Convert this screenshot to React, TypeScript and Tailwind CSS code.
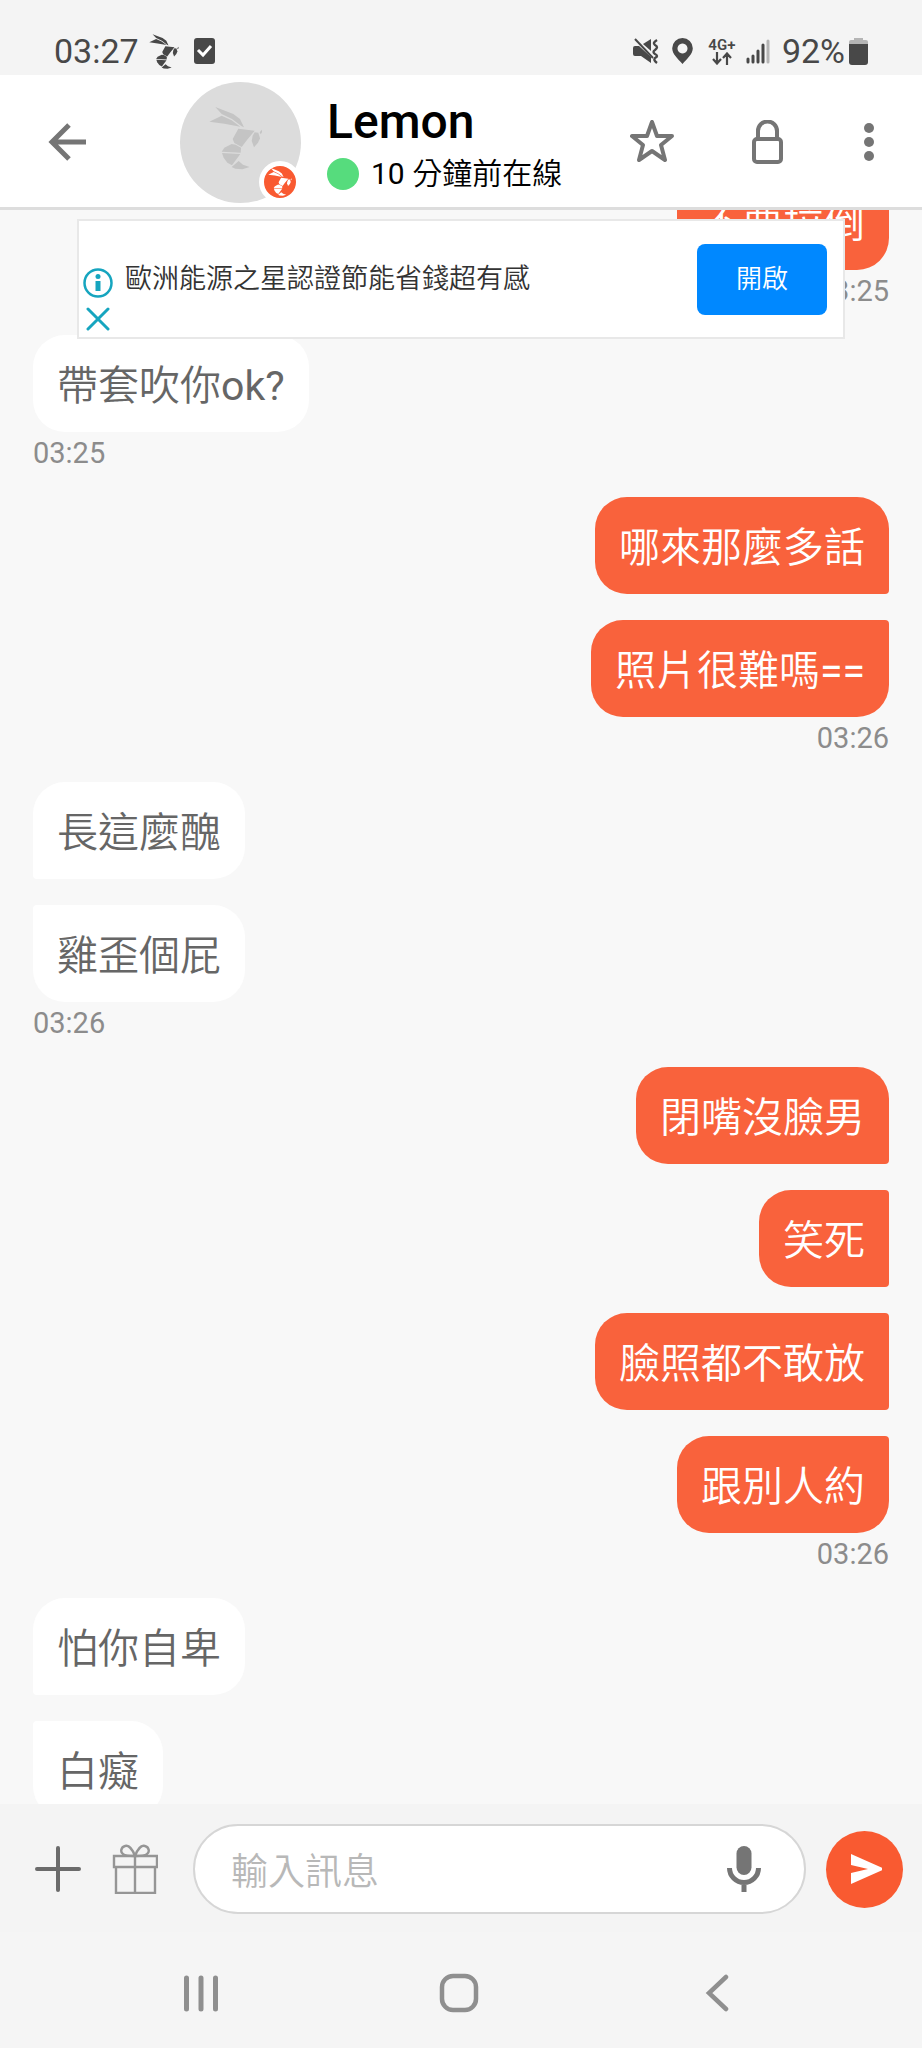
import React, { useState } from "react";

type Bubble = {
  text: string;
  shape: string;
};

type Group = {
  mine: boolean;
  time?: string;
  bubbles: Bubble[];
};

const groups: Group[] = [
  {
    mine: true,
    time: "03:25",
    bubbles: [{ text: "不要拉倒", shape: "rounded-[32px] rounded-tr-[4px]" }],
  },
  {
    mine: false,
    time: "03:25",
    bubbles: [{ text: "帶套吹你ok?", shape: "rounded-[32px]" }],
  },
  {
    mine: true,
    time: "03:26",
    bubbles: [
      { text: "哪來那麼多話", shape: "rounded-[32px] rounded-br-[4px]" },
      { text: "照片很難嗎==", shape: "rounded-[32px] rounded-tr-[4px]" },
    ],
  },
  {
    mine: false,
    time: "03:26",
    bubbles: [
      { text: "長這麼醜", shape: "rounded-[32px] rounded-bl-[4px]" },
      { text: "雞歪個屁", shape: "rounded-[32px] rounded-tl-[4px]" },
    ],
  },
  {
    mine: true,
    time: "03:26",
    bubbles: [
      { text: "閉嘴沒臉男", shape: "rounded-[32px] rounded-br-[4px]" },
      { text: "笑死", shape: "rounded-[32px] rounded-r-[4px]" },
      { text: "臉照都不敢放", shape: "rounded-[32px] rounded-r-[4px]" },
      { text: "跟別人約", shape: "rounded-[32px] rounded-tr-[4px]" },
    ],
  },
  {
    mine: false,
    bubbles: [
      { text: "怕你自卑", shape: "rounded-[32px] rounded-bl-[4px]" },
      { text: "白癡", shape: "rounded-[32px] rounded-tl-[4px]" },
    ],
  },
];

function Hornet({ className, viewBox = "115 110 159 189" }: { className: string; viewBox?: string }) {
  return (
    <svg className={className} viewBox={viewBox} fill="currentColor" aria-hidden="true">
      <path d="M133 111 L154 119 L187 132 L207 147 L219 172 L211 168 L183 147 L152 132 Z" />
      <path d="M115 155 L152 137 L182 151 L208 170 L160 161 Z" />
      <path d="M202 176 L251 182 L228 210 L212 231 L190 219 L185 207 Z" />
      <path d="M251 187 L262 188 L267 205 L261 218 L249 232 L242 213 L245 197 Z" />
      <path d="M266 187 L273 179 L273 187 L269 193 Z" />
      <path d="M182 222 L194 224 L210 233 L209 248 L152 245 L160 233 Z" />
      <path d="M153 249 L208 252 L183 286 L169 278 L158 263 Z" />
      <path d="M203 273 L216 284 L236 291 L214 298 L193 296 L182 291 Z" />
    </svg>
  );
}

function StatusBar() {
  return (
    <div className="flex h-[75px] shrink-0 items-center bg-[#f4f4f4] pt-[27px] pr-[54px] pl-[54px] text-[#484848]">
      <span className="text-[34px] leading-[40px]">03:27</span>
      <Hornet className="ml-[10px] h-[35px] w-[30px]" />
      <svg className="ml-[15px] h-[26px] w-[21px]" viewBox="0 0 21 26" aria-hidden="true">
        <rect width="21" height="26" rx="3" fill="currentColor" />
        <path d="M4 12 L9 17 L17 8" fill="none" stroke="white" strokeWidth="3" />
      </svg>

      <div className="ml-auto flex items-center">
        <svg className="h-[26px] w-[27px]" viewBox="0 0 27 26" fill="currentColor" aria-hidden="true">
          <path d="M0 10 Q0 8 2 8 H6 L18 19 V25 L8 18 H2 Q0 18 0 16 Z" />
          <path d="M10 6 L18 1 V13 Z" />
          <path d="M2 1 L20 20" stroke="currentColor" strokeWidth="2" />
          <path
            d="M24 2 Q19 5 22 7 Q26 9 22 12 Q19 14 22 16 Q26 18 22 20 Q20 22 24 25"
            fill="none"
            stroke="currentColor"
            strokeWidth="2.4"
          />
        </svg>
        <svg className="ml-3 h-[26px] w-[21px]" viewBox="0 0 21 26" fill="currentColor" aria-hidden="true">
          <path
            fillRule="evenodd"
            d="M10.500 0 A10.300 10.300 0 0 1 20.800 10.300 C20.800 16 15 21 10.500 26 C6 21 0.200 16 0.200 10.300 A10.300 10.300 0 0 1 10.500 0 Z M10.500 5.500 a5 5 0 1 0 0.010 0 Z"
          />
        </svg>
        <div className="ml-[14px] flex w-[30px] flex-col items-center">
          <span className="text-[15px] leading-[14px] font-semibold">4G+</span>
          <svg className="h-[13px] w-[20px]" viewBox="0 0 20 13" fill="none" stroke="currentColor" strokeWidth="2.2" aria-hidden="true">
            <path d="M5 0 V11 M1 7 L5 11.500 L9 7 M15 13 V2 M11 6 L15 1.500 L19 6" />
          </svg>
        </div>
        <svg className="ml-[9px] h-[26px] w-[24px]" viewBox="0 0 24 26" fill="none" stroke="currentColor" strokeWidth="3" strokeLinecap="round" aria-hidden="true">
          <path d="M2 21 V24 M7 18 V24 M12 13 V24 M17 7 V24" />
          <path d="M22 3 V24" stroke="#b5b5b5" />
        </svg>
        <span className="ml-3 text-[34px] leading-[40px]">92%</span>
        <svg className="ml-1 h-[28px] w-[19px]" viewBox="0 0 19 28" aria-hidden="true">
          <path d="M5 1 H14 V3 H17 Q19 3 19 5 V8 H0 V5 Q0 3 2 3 H5 Z" fill="#b5b5b5" />
          <path d="M0 7 H19 V25 Q19 28 16 28 H3 Q0 28 0 25 Z" fill="currentColor" />
        </svg>
      </div>
    </div>
  );
}

function Header() {
  return (
    <header className="flex h-[135px] shrink-0 items-center border-b-[3px] border-[#dddddd] bg-white px-12 pt-[2px] text-[#757575]">
      <button type="button" aria-label="返回">
        <svg className="h-[38px] w-[38px]" viewBox="0 0 38 38" fill="none" stroke="currentColor" strokeWidth="5">
          <path d="M38 19 H4 M21 2 L4 19 L21 36" />
        </svg>
      </button>

      <div className="relative ml-[94px] size-[121px] shrink-0 rounded-full bg-[#dcdcdc] text-[#c4c4c4]">
        <Hornet className="size-full" viewBox="27 36 363 363" />
        <span className="absolute right-0 bottom-0 flex size-[42px] items-center justify-center rounded-full border-[5px] border-white bg-[#f95a31] text-white">
          <Hornet className="h-[28px] w-[24px]" />
        </span>
      </div>

      <div className="ml-[26px] pt-[10px] text-black">
        <h1 className="text-[48px] leading-[54px] font-medium">Lemon</h1>
        <p className="flex items-center text-[30px] leading-[50px] font-[350]">
          <span className="mr-3 size-8 rounded-full bg-[#56dc7d]" />
          <span>
            <span className="font-normal">10 </span>分鐘前在線
          </span>
        </p>
      </div>

      <div className="ml-auto flex items-center gap-[78px]">
        <button type="button" aria-label="收藏">
          <svg className="h-[44px] w-[44px]" viewBox="0 0 44 44" fill="none" stroke="currentColor" strokeWidth="4" strokeLinejoin="round">
            <path d="M22 2 L27 16 L42 16 L31 25 L35 40 L22 31 L9 40 L13 25 L2 16 L17 16 Z" />
          </svg>
        </button>
        <button type="button" aria-label="鎖定">
          <svg className="h-[44px] w-[32px]" viewBox="0 0 32 44" fill="none" stroke="currentColor" strokeWidth="4">
            <rect x="2" y="19" width="27" height="23" rx="3" />
            <path d="M6 19 V11 A9.500 9.500 0 0 1 25 11 V19" />
          </svg>
        </button>
        <button type="button" aria-label="更多">
          <svg className="h-[40px] w-[12px]" viewBox="0 0 12 40" fill="currentColor">
            <circle cx="7" cy="6" r="5" />
            <circle cx="7" cy="20" r="5" />
            <circle cx="7" cy="34" r="5" />
          </svg>
        </button>
      </div>
    </header>
  );
}

function AdBanner() {
  return (
    <aside className="absolute inset-x-[77px] top-[9px] flex h-[120px] border-2 border-[#e8e8e8] bg-white">
      <div className="flex w-[37px] flex-col items-center justify-end gap-[9px] pb-[6px] text-[#16a5bf]">
        <svg className="h-[30px] w-[30px]" viewBox="0 0 30 30" fill="currentColor" aria-hidden="true">
          <circle cx="15" cy="15" r="13.500" fill="none" stroke="currentColor" strokeWidth="2.500" />
          <circle cx="15" cy="8.500" r="2.500" />
          <path d="M12.500 13 H17.500 V23 H12.500 Z" />
        </svg>
        <button type="button" aria-label="關閉廣告">
          <svg className="h-[24px] w-[24px]" viewBox="0 0 24 24" fill="none" stroke="currentColor" strokeWidth="3" strokeLinecap="round">
            <path d="M2 2 L22 22 M22 2 L2 22" />
          </svg>
        </button>
      </div>
      <p className="flex-1 self-center pl-[9px] text-[27px] leading-[40px] font-[350] text-[#333333]">
        歐洲能源之星認證節能省錢超有感
      </p>
      <button type="button" className="mr-4 h-[71px] w-[130px] self-center rounded-[8px] bg-[#0088ff] text-[26px] font-[350] text-white">
        開啟
      </button>
    </aside>
  );
}

// chinese runs are set a bit lighter than the latin ones
function MixedText({ text }: { text: string }) {
  return (
    <>
      {text.split(/([a-z?=]+)/).map((part, i) =>
        i % 2 ? (
          <span key={i} className="font-normal">
            {part}
          </span>
        ) : (
          part
        )
      )}
    </>
  );
}

function MessageGroup({ group }: { group: Group }) {
  return (
    <li className={group.mine ? "flex flex-col items-end" : "flex flex-col items-start"}>
      <div className={group.mine ? "flex flex-col items-end gap-[26px]" : "flex flex-col items-start gap-[26px]"}>
        {group.bubbles.map((b) => (
          <p
            key={b.text}
            className={
              (group.mine ? "bg-[#f9623c] text-white " : "bg-white text-[#666666] ") +
              "px-6 pt-[27px] pb-[21px] text-[41px] leading-[49px] font-[350] " +
              b.shape
            }
          >
            <MixedText text={b.text} />
          </p>
        ))}
      </div>
      {group.time && (
        <time className="pt-1 pb-[27px] text-[29px] leading-[34px] text-[#8c8c8c]">{group.time}</time>
      )}
    </li>
  );
}

function Composer() {
  const [message, setMessage] = useState("");

  return (
    <form
      onSubmit={(e) => e.preventDefault()}
      className="flex h-[128px] shrink-0 items-center bg-[#f4f4f4] pt-[2px] pr-[19px] pl-[34px]"
    >
      <button type="button" aria-label="新增" className="text-[#6b6b6b]">
        <svg className="h-[48px] w-[48px]" viewBox="0 0 48 48" fill="none" stroke="currentColor" strokeWidth="4" strokeLinecap="round">
          <path d="M24 3 V45 M3 24 H45" />
        </svg>
      </button>
      <button type="button" aria-label="禮物" className="ml-[30px] text-[#959595]">
        <svg className="h-[50px] w-[46px]" viewBox="0 0 46 50" fill="none" stroke="currentColor" strokeWidth="2.4">
          <path d="M2 12 H45 V23 H2 Z M4 23 H43 V49 H4 Z M23 12 V49" />
          <path d="M23 12 C20 4 16 1 13 2 C9 3 8 8 11 10 C13 12 18 12 23 12 C28 12 33 12 35 10 C38 8 37 3 33 2 C30 1 26 4 23 12 Z" />
        </svg>
      </button>

      <div className="ml-[35px] flex h-[90px] min-w-0 flex-1 items-center rounded-full border-2 border-[#d6d6d6] bg-white pr-[43px] pl-9">
        <input
          type="text"
          aria-label="輸入訊息"
          placeholder="輸入訊息"
          value={message}
          onChange={(e) => setMessage(e.target.value)}
          className="min-w-0 flex-1 pt-[7px] text-[37px] leading-[56px] font-[350] text-[#666666] outline-none placeholder:text-[#b8b8b8]"
        />
        <button type="button" aria-label="語音" className="text-[#757575]">
          <svg className="h-[46px] w-[34px]" viewBox="0 0 34 46" fill="currentColor">
            <rect x="9.500" y="0" width="15" height="29" rx="7.500" />
            <path d="M2.500 22 A14.500 14.500 0 0 0 31.500 22 M17 36 V46" fill="none" stroke="currentColor" strokeWidth="5" />
          </svg>
        </button>
      </div>

      <button
        type="submit"
        aria-label="傳送"
        className="ml-5 flex size-[77px] items-center justify-center rounded-full bg-[#f95a31] text-white"
      >
        <svg className="h-[30px] w-[34px]" viewBox="0 0 34 30" fill="currentColor">
          <path d="M3 0 L37 15 L3 30 V19 L20 15 L3 11 Z" />
        </svg>
      </button>
    </form>
  );
}

function NavBar() {
  return (
    <nav className="grid h-[116px] shrink-0 grid-cols-3 items-center justify-items-center bg-[#f5f5f5] pt-[5px] pr-[76px] pl-[72px] text-[#8f8f8f]">
      <button type="button" aria-label="最近使用">
        <svg className="h-[38px] w-[36px]" viewBox="0 0 36 38" fill="none" stroke="currentColor" strokeWidth="5" strokeLinecap="round">
          <path d="M3.500 4 V35 M18 4 V35 M32.500 4 V35" />
        </svg>
      </button>
      <button type="button" aria-label="首頁">
        <svg className="h-[40px] w-[40px]" viewBox="0 0 40 40" fill="none" stroke="currentColor" strokeWidth="4.500">
          <rect x="3" y="3" width="34" height="34" rx="11" />
        </svg>
      </button>
      <button type="button" aria-label="上一頁">
        <svg className="h-[38px] w-[24px]" viewBox="0 0 24 38" fill="none" stroke="currentColor" strokeWidth="4.500" strokeLinecap="round">
          <path d="M21 3 L4 19 L21 35" />
        </svg>
      </button>
    </nav>
  );
}

export default function App() {
  return (
    <div
      lang="zh-Hant"
      className="flex h-screen flex-col overflow-hidden bg-[#f8f8f8] font-[Roboto,'Noto_Sans_CJK_TC',sans-serif]"
    >
      <StatusBar />
      <Header />
      <main className="relative min-h-0 flex-1 overflow-hidden">
        {/* list is scrolled a little past the first bubble */}
        <ul className="-mt-[37px] px-[33px]">
          {groups.map((g, i) => (
            <MessageGroup key={i} group={g} />
          ))}
        </ul>
        <AdBanner />
      </main>
      <Composer />
      <NavBar />
    </div>
  );
}
